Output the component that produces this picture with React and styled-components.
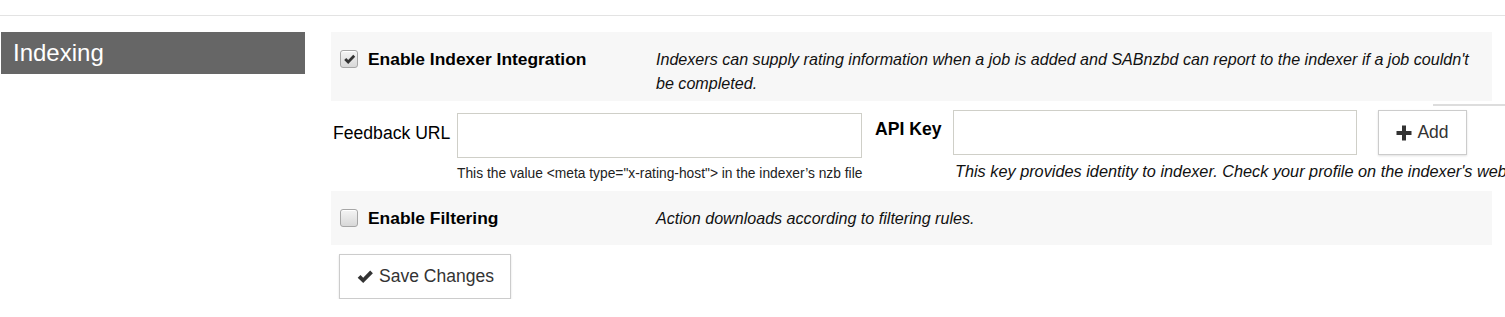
import React from "react";
import styled, { createGlobalStyle } from "styled-components";

const GlobalStyle = createGlobalStyle`
  html, body {
    margin: 0;
    padding: 0;
    background: #ffffff;
    overflow: hidden;
  }
  body {
    font-family: "Liberation Sans", Arial, sans-serif;
    color: #000;
  }
`;

const TopBar = styled.div`
  height: 15px;
  border-bottom: 1px solid #e3e3e3;
`;

const Section = styled.div`
  display: flex;
  align-items: flex-start;
  margin-top: 16px;
`;

const SectionTitle = styled.div`
  width: 292px;
  height: 42px;
  margin-left: 1px;
  padding-left: 12px;
  background-color: #666666;
  color: #ffffff;
  font-size: 24px;
  line-height: 42px;
`;

const Settings = styled.div`
  width: 1161px;
  margin-left: 26px;
  display: flex;
  flex-direction: column;
`;

const Panel = styled.div`
  display: flex;
  align-items: flex-start;
  background-color: #f7f7f7;
  padding: 15px 12px ${(props) => props.bottom || 15}px 9px;
`;

const OptionLabel = styled.label`
  display: flex;
  align-items: center;
  flex: 0 0 316px;
  height: 24px;
  font-size: 17.4px;
  font-weight: 700;
  white-space: nowrap;
`;

const Box = styled.span`
  display: inline-flex;
  align-items: center;
  justify-content: center;
  flex: 0 0 auto;
  width: 16px;
  height: 16px;
  margin-right: 10px;
  border: 1px solid #a6a6a6;
  border-radius: 3px;
  background: linear-gradient(#f4f4f4, #d8d8d8);
  box-shadow: inset 0 1px 0 #ffffff;
`;

const Desc = styled.div`
  flex: 1;
  font-size: 16.1px;
  font-style: italic;
  line-height: 24px;
  color: #111;
`;

const FieldRow = styled.div`
  position: relative;
  display: flex;
  align-items: flex-start;
  padding-bottom: 10px;
`;

const FieldLabel = styled.div`
  flex: 0 0 auto;
  width: ${(props) => props.w}px;
  margin-top: ${(props) => props.top}px;
  margin-left: ${(props) => props.left}px;
  font-size: 17.6px;
  font-weight: ${(props) => (props.bold ? 700 : 400)};
  line-height: 20px;
  white-space: nowrap;
`;

const Field = styled.div`
  flex: 0 0 auto;
  width: ${(props) => props.w}px;
  margin-top: ${(props) => props.top}px;
  display: flex;
  flex-direction: column;
`;

const Input = styled.input`
  box-sizing: border-box;
  width: 100%;
  height: 45px;
  border: 1px solid #cfcfc8;
  background: #ffffff;
  padding: 6px 10px;
  font-size: 16px;
  outline: none;
`;

const SmallHint = styled.div`
  margin-top: 8px;
  font-size: 13.8px;
  line-height: 15px;
  color: #222;
  white-space: nowrap;
`;

const ItalicHint = styled.div`
  margin-top: 6px;
  margin-left: 2px;
  font-size: 16.3px;
  font-style: italic;
  line-height: 20px;
  color: #111;
  white-space: nowrap;
`;

const Button = styled.button`
  display: flex;
  align-items: center;
  justify-content: center;
  gap: 5px;
  flex: 0 0 auto;
  box-sizing: border-box;
  width: ${(props) => props.w}px;
  height: 45px;
  margin-top: ${(props) => props.top || 0}px;
  margin-left: ${(props) => props.left || 0}px;
  border: 1px solid #cccccc;
  background: #ffffff;
  color: #333333;
  font-family: "Liberation Sans", Arial, sans-serif;
  font-size: 17.5px;
  box-shadow: 0 1px 2px rgba(0, 0, 0, 0.12);
  padding: 0;
  cursor: pointer;
`;

const EdgeLine = styled.div`
  position: absolute;
  top: 3px;
  left: 1102px;
  width: 100px;
  height: 2px;
  background: #dddddd;
`;

const CheckMark = ({ size = 12 }) => (
  <svg width={size} height={size} viewBox="0 0 16 16">
    <path d="M1.5 8.6 L4 6.2 L6.4 8.6 L12.6 2.2 L15 4.6 L6.4 13.4 Z" fill="#333" />
  </svg>
);

const Plus = () => (
  <svg width="16" height="16" viewBox="0 0 16 16">
    <path d="M6 0.5 H10 V6 H15.5 V10 H10 V15.5 H6 V10 H0.5 V6 H6 Z" fill="#333" />
  </svg>
);

const Checkbox = ({ checked }) => (
  <Box>{checked && <CheckMark size={13} />}</Box>
);

function App() {
  return (
    <>
      <GlobalStyle />
      <TopBar />
      <Section>
        <SectionTitle>Indexing</SectionTitle>
        <Settings>
          <Panel bottom={6}>
            <OptionLabel>
              <Checkbox checked />
              Enable Indexer Integration
            </OptionLabel>
            <Desc>
              Indexers can supply rating information when a job is added and
              SABnzbd can report to the indexer if a job couldn't be completed.
            </Desc>
          </Panel>
          <FieldRow>
            <EdgeLine />
            <FieldLabel w={124} top={22} left={2}>
              Feedback URL
            </FieldLabel>
            <Field w={405} top={12}>
              <Input />
              <SmallHint>
                This the value &lt;meta type="x-rating-host"&gt; in the
                indexer’s nzb file
              </SmallHint>
            </Field>
            <FieldLabel w={78} top={18} left={13} bold>
              API Key
            </FieldLabel>
            <Field w={404} top={9}>
              <Input />
              <ItalicHint>
                This key provides identity to indexer. Check your profile on the
                indexer's website.
              </ItalicHint>
            </Field>
            <Button w={89} top={9} left={21}>
              <Plus />
              Add
            </Button>
          </FieldRow>
          <Panel>
            <OptionLabel>
              <Checkbox />
              Enable Filtering
            </OptionLabel>
            <Desc>Action downloads according to filtering rules.</Desc>
          </Panel>
          <Button w={172} top={9} left={8}>
            <CheckMark size={18} />
            Save Changes
          </Button>
        </Settings>
      </Section>
    </>
  );
}

export default App;
